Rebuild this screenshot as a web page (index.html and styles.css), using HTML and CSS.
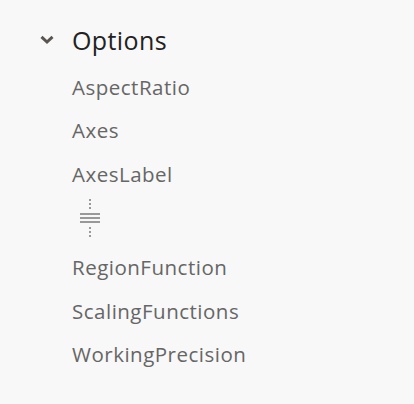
FILE: index.html
```html
<!DOCTYPE html>
<html>
<head>
<meta charset="utf-8">
<link rel="stylesheet" href="styles.css">
</head>
<body>
<div class="panel">
  <div class="header">
    <svg class="chevron" width="14" height="10" viewBox="0 0 14 10"><path d="M1.5 1.8 L7 7 L12.5 1.8" fill="none" stroke="#5a5550" stroke-width="3"/></svg>
    <span class="title">Options</span>
  </div>
  <ul class="list">
    <li class="item">AspectRatio</li>
    <li class="item">Axes</li>
    <li class="item">AxesLabel</li>
    <li class="item ellipsis">
      <svg width="20" height="38" viewBox="0 0 20 38"><g fill="#999"><rect x="9" y="0" width="2" height="2"/><rect x="9" y="4" width="2" height="2"/><rect x="9" y="8" width="2" height="2"/><rect x="0" y="14" width="20" height="2"/><rect x="0" y="18" width="20" height="2"/><rect x="0" y="22" width="20" height="2"/><rect x="9" y="28" width="2" height="2"/><rect x="9" y="32" width="2" height="2"/><rect x="9" y="36" width="2" height="2"/></g></svg>
    </li>
    <li class="item">RegionFunction</li>
    <li class="item">ScalingFunctions</li>
    <li class="item">WorkingPrecision</li>
  </ul>
</div>
</body>
</html>
```
FILE: styles.css
```css
html, body { margin: 0; padding: 0; background: #f8f8f8; }
body { font-family: "Open Sans", Lato, sans-serif; width: 414px; height: 404px; overflow: hidden; }
.panel { padding: 23px 0 0 40px; }
.header { display: flex; align-items: center; height: 34px; }
.chevron { margin-right: 18px; }
.title { font-size: 25px; color: #222; letter-spacing: 0.4px; }
.list { list-style: none; margin: 0; padding: 0 0 0 32px; }
.item { font-size: 20.5px; color: #666; height: 43.5px; display: flex; align-items: center; letter-spacing: 0.5px; }
.item:first-child { margin-top: 8px; }
.ellipsis { box-sizing: border-box; height: 50px; align-items: flex-start; padding-top: 3px; }
.ellipsis svg { display: block; transform: translateX(8px); }
```
